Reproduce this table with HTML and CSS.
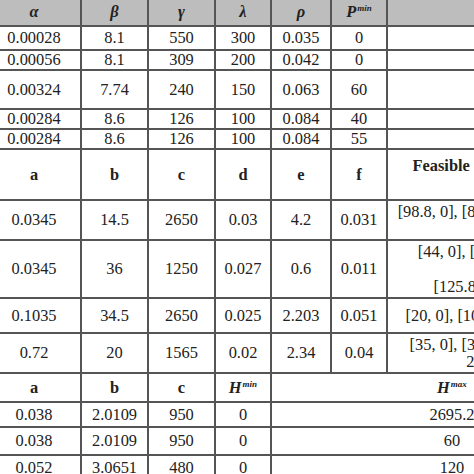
FILE: index.html
```html
<!DOCTYPE html>
<html>
<head>
<meta charset="utf-8">
<link rel="stylesheet" href="styles.css">
</head>
<body>
<table class="params">
  <colgroup>
    <col class="c1"><col class="c2"><col class="c3"><col class="c4"><col class="c5"><col class="c6"><col class="c7">
  </colgroup>
  <tbody>
    <tr class="h-greek">
      <td class="hd gi">α</td><td class="hd gi">β</td><td class="hd gi">γ</td><td class="hd gi">λ</td><td class="hd gi">ρ</td><td class="hd gi">P<sup class="sup">min</sup></td><td class="hd"></td>
    </tr>
    <tr class="r24"><td>0.00028</td><td>8.1</td><td>550</td><td>300</td><td>0.035</td><td>0</td><td></td></tr>
    <tr class="r20"><td>0.00056</td><td>8.1</td><td>309</td><td>200</td><td>0.042</td><td>0</td><td></td></tr>
    <tr class="r39"><td>0.00324</td><td>7.74</td><td>240</td><td>150</td><td>0.063</td><td>60</td><td></td></tr>
    <tr class="r20"><td>0.00284</td><td>8.6</td><td>126</td><td>100</td><td>0.084</td><td>40</td><td></td></tr>
    <tr class="r20"><td>0.00284</td><td>8.6</td><td>126</td><td>100</td><td>0.084</td><td>55</td><td></td></tr>

    <tr class="h-abc">
      <td class="b">a</td><td class="b">b</td><td class="b">c</td><td class="b">d</td><td class="b">e</td><td class="b">f</td><td class="b feas-head">Feasible operating region of<br>(MW)</td>
    </tr>
    <tr class="r40"><td>0.0345</td><td>14.5</td><td>2650</td><td>0.03</td><td>4.2</td><td>0.031</td><td class="feas">[98.8, 0], [88.4, 170], [110.2, 168]<br>[45, 0]</td></tr>
    <tr class="r58"><td>0.0345</td><td>36</td><td>1250</td><td>0.027</td><td>0.6</td><td>0.011</td><td class="feas">[44, 0], [44, 40], [125.8, 40]<br>[125.8, 40]<br>[125.8, 0], [125.8, 140]</td></tr>
    <tr class="r35"><td>0.1035</td><td>34.5</td><td>2650</td><td>0.025</td><td>2.203</td><td>0.051</td><td class="feas">[20, 0], [100, 105], [125.8, 105]</td></tr>
    <tr class="r40"><td>0.72</td><td>20</td><td>1565</td><td>0.02</td><td>2.34</td><td>0.04</td><td class="feas">[35, 0], [35, 120], [130.5, 120]<br>220.5, 120.5]</td></tr>

    <tr class="h-hh">
      <td class="b">a</td><td class="b">b</td><td class="b">c</td><td class="gi">H<sup class="sup">min</sup></td><td class="gi" colspan="3">H<sup class="sup">max</sup></td>
    </tr>
    <tr class="r25"><td>0.038</td><td>2.0109</td><td>950</td><td>0</td><td colspan="3">2695.2</td></tr>
    <tr class="r28"><td>0.038</td><td>2.0109</td><td>950</td><td>0</td><td colspan="3">60</td></tr>
    <tr class="r25"><td>0.052</td><td>3.0651</td><td>480</td><td>0</td><td colspan="3">120</td></tr>
  </tbody>
</table>
</body>
</html>
```

FILE: styles.css
```css
html, body {
  margin: 0;
  padding: 0;
  background: #ffffff;
  overflow: hidden;
}

.params {
  border-collapse: collapse;
  table-layout: fixed;
  width: 646px;
  margin-left: -14px;
  margin-top: -3px;
  font-family: "Liberation Serif", "Times New Roman", serif;
  font-size: 16.4px;
  color: #222222;
}

.c1 { width: 94px; }
.c2 { width: 67px; }
.c3 { width: 67px; }
.c4 { width: 56px; }
.c5 { width: 60px; }
.c6 { width: 56px; }
.c7 { width: 246px; }

.params td {
  border: 2px solid #555555;
  text-align: center;
  vertical-align: middle;
  padding: 0 2px;
  line-height: 17.5px;
  white-space: nowrap;
  overflow: hidden;
}

.hd {
  background: #bdbdbd;
}

.gi {
  font-weight: bold;
  font-style: italic;
}

.b {
  font-weight: bold;
}

.sup {
  font-size: 9px;
  vertical-align: 6px;
  line-height: 0;
  margin-left: 1px;
}

.h-greek { height: 28px; }
.h-abc { height: 51px; }
.h-hh { height: 29px; }
.r20 { height: 20px; }
.r24 { height: 24px; }
.r25 { height: 25px; }
.r28 { height: 28px; }
.r35 { height: 35px; }
.r39 { height: 39px; }
.r40 { height: 40px; }
.r58 { height: 58px; }

.feas-head {
  vertical-align: top;
  padding-top: 1px;
}
```
